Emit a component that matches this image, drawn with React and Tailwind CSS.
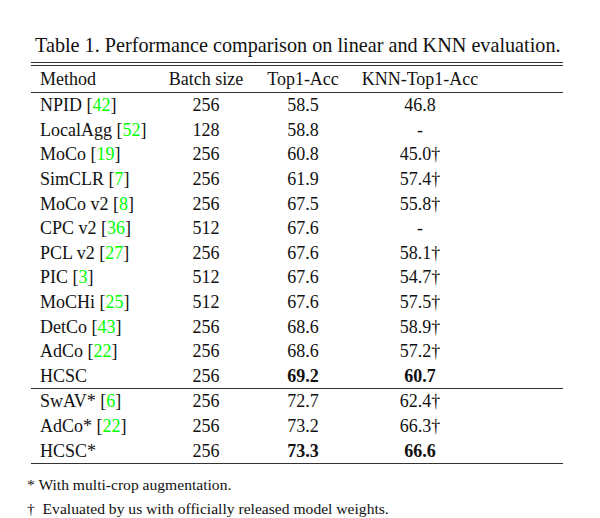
const rows = [
  ['NPID', '42', '256', '58.5', '46.8'],
  ['LocalAgg', '52', '128', '58.8', '-'],
  ['MoCo', '19', '256', '60.8', '45.0†'],
  ['SimCLR', '7', '256', '61.9', '57.4†'],
  ['MoCo v2', '8', '256', '67.5', '55.8†'],
  ['CPC v2', '36', '512', '67.6', '-'],
  ['PCL v2', '27', '256', '67.6', '58.1†'],
  ['PIC', '3', '512', '67.6', '54.7†'],
  ['MoCHi', '25', '512', '67.6', '57.5†'],
  ['DetCo', '43', '256', '68.6', '58.9†'],
  ['AdCo', '22', '256', '68.6', '57.2†'],
]

const multiCrop = [
  ['SwAV*', '6', '256', '72.7', '62.4†'],
  ['AdCo*', '22', '256', '73.2', '66.3†'],
]

function Row({ name, cite, batch, top1, knn, bold }) {
  return (
    <div className="flex h-[24.6px] items-center">
      <div className="w-[129px] pl-[9px] whitespace-nowrap">
        {name}
        {cite && (
          <>
            {' '}[<span className="text-[#00ff00]">{cite}</span>]
          </>
        )}
      </div>
      <div className="w-[92px] text-center">{batch}</div>
      <div className={`w-[102px] text-center ${bold ? 'font-bold' : ''}`}>{top1}</div>
      <div className={`w-[132px] text-center ${bold ? 'font-bold' : ''}`}>{knn}</div>
    </div>
  )
}

export default function App() {
  return (
    <div className="w-[600px] h-[518px] bg-white text-[#111] text-[18px] leading-[24px] font-['Liberation_Serif',serif] overflow-hidden">
      <div className="pt-[33px] pl-[35px] text-[20.2px] whitespace-nowrap">
        Table 1. Performance comparison on linear and KNN evaluation.
      </div>
      <div className="ml-[31px] w-[532px] mt-[5px]">
        <div className="border-t border-[#333] mt-0" />
        <div className="border-t border-[#333] mt-[2px]" />
        <div className="flex h-[26px] items-center">
          <div className="w-[129px] pl-[9px]">Method</div>
          <div className="w-[92px] text-center whitespace-nowrap">Batch size</div>
          <div className="w-[102px] text-center">Top1-Acc</div>
          <div className="w-[132px] text-center whitespace-nowrap">KNN-Top1-Acc</div>
        </div>
        <div className="border-t border-[#333]" />
        <div>
          {rows.map((r) => (
            <Row key={r[0]} name={r[0]} cite={r[1]} batch={r[2]} top1={r[3]} knn={r[4]} />
          ))}
          <Row name="HCSC" batch="256" top1="69.2" knn="60.7" bold />
        </div>
        <div className="border-t border-[#333]" />
        <div>
          {multiCrop.map((r) => (
            <Row key={r[0]} name={r[0]} cite={r[1]} batch={r[2]} top1={r[3]} knn={r[4]} />
          ))}
          <Row name="HCSC*" batch="256" top1="73.3" knn="66.6" bold />
        </div>
        <div className="border-t border-[#333]" />
      </div>
      <div className="ml-[27px] mt-[9px] text-[15.6px] leading-[24px]">
        <div>* With multi-crop augmentation.</div>
        <div>†&nbsp; Evaluated by us with officially released model weights.</div>
      </div>
    </div>
  )
}
